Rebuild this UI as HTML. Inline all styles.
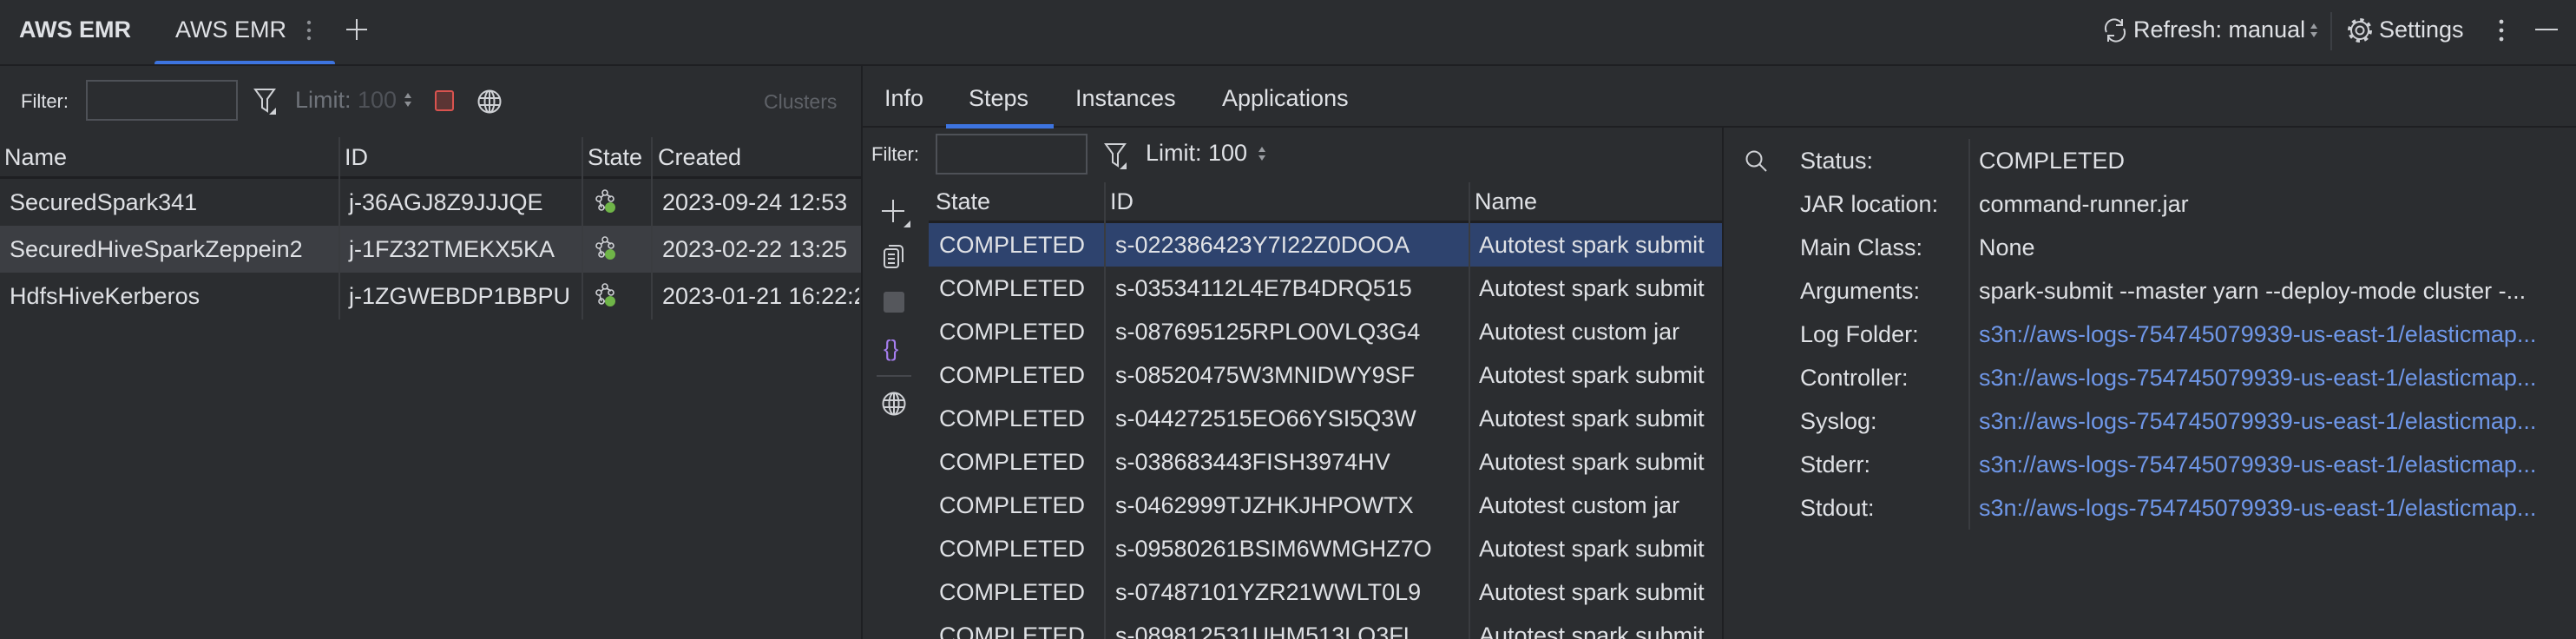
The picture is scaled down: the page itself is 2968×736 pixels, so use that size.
<!DOCTYPE html>
<html><head><meta charset="utf-8"><style>
*{margin:0;padding:0;box-sizing:border-box}
body{width:2968px;height:736px;background:#2b2d30;color:#dfe1e5;font-family:"Liberation Sans",sans-serif;font-size:27px;position:relative;overflow:hidden}
.a{position:absolute;white-space:nowrap;line-height:30px;height:30px}
.l{position:absolute}
.dim{color:#6f737a}
.lnk{color:#6f97e8}
</style></head><body>
<!-- header -->
<div class="a" style="left:22px;top:19px;font-weight:bold">AWS EMR</div>
<div class="a" style="left:202px;top:19px">AWS EMR</div>
<svg class="l" style="left:350px;top:22px" width="12" height="26"><circle cx="6" cy="4" r="2.2" fill="#8c8f94"/><circle cx="6" cy="13" r="2.2" fill="#8c8f94"/><circle cx="6" cy="22" r="2.2" fill="#8c8f94"/></svg>
<svg class="l" style="left:397px;top:20px" width="28" height="28"><path d="M14 2V26M2 14H26" stroke="#cfd1d5" stroke-width="2"/></svg>
<div class="l" style="left:178px;top:70px;width:208px;height:6px;background:#3d74e0;border-radius:3px"></div>
<div class="l" style="left:0;top:74px;width:2968px;height:2px;background:#1e1f22"></div>
<svg class="l" style="left:2421px;top:20px" width="32" height="30" fill="none" stroke="#cfd1d5" stroke-width="2"><path d="M6 17A10 10 0 0 1 24 8M26 13A10 10 0 0 1 8 22"/><path d="M24 2V9H17M8 28V21H15"/></svg>
<div class="a" style="left:2458px;top:19px">Refresh: manual</div>
<svg class="l" style="left:2661px;top:24px" width="10" height="22"><path d="M1 9L5 3L9 9ZM1 13L5 19L9 13Z" fill="#9a9da2"/></svg>
<div class="l" style="left:2685px;top:14px;width:2px;height:44px;background:#3c3f44"></div>
<svg class="l" style="left:2704px;top:20px" width="30" height="30" fill="none" stroke="#cfd1d5" stroke-width="2"><circle cx="15" cy="15" r="4.5"/><circle cx="15" cy="15" r="10"/><circle cx="15" cy="15" r="12" stroke-width="4" stroke-dasharray="4.2 5.2"/></svg>
<div class="a" style="left:2741px;top:19px">Settings</div>
<svg class="l" style="left:2876px;top:20px" width="12" height="30"><circle cx="6" cy="5" r="2.4" fill="#cfd1d5"/><circle cx="6" cy="15" r="2.4" fill="#cfd1d5"/><circle cx="6" cy="25" r="2.4" fill="#cfd1d5"/></svg>
<div class="l" style="left:2921px;top:33px;width:26px;height:2px;background:#cfd1d5"></div>

<!-- left panel -->
<div class="l" style="left:992px;top:76px;width:2px;height:660px;background:#1e1f22"></div>
<div class="a" style="left:24px;top:102px;font-size:22px">Filter:</div>
<div class="l" style="left:99px;top:92px;width:175px;height:47px;border:2px solid #4e5157"></div>
<svg class="l" style="left:292px;top:100px" width="34" height="34" fill="none" stroke="#cfd1d5" stroke-width="2"><path d="M2 3H24L16 14V28L10 24V14Z"/><path d="M26 24V32H18Z" fill="#cfd1d5" stroke="none"/></svg>
<div class="a dim" style="left:340px;top:100px">Limit: <span style="color:#4f5258">100</span></div>
<svg class="l" style="left:465px;top:104px" width="10" height="22"><path d="M1 9L5 3L9 9ZM1 13L5 19L9 13Z" fill="#8c8f94"/></svg>
<div class="l" style="left:501px;top:104px;width:22px;height:24px;border:2px solid #d9534f;background:#5b3534;border-radius:3px"></div>
<svg class="l" style="left:549px;top:102px" width="30" height="30" fill="none" stroke="#cfd1d5" stroke-width="2"><circle cx="15" cy="15" r="12.5"/><ellipse cx="15" cy="15" rx="5.5" ry="12.5"/><path d="M3 11H27M3 19H27M15 2.5V27.5"/></svg>
<div class="a" style="left:880px;top:102px;font-size:23px;color:#5f6268">Clusters</div>
<div class="a" style="left:5px;top:166px">Name</div>
<div class="a" style="left:397px;top:166px">ID</div>
<div class="a" style="left:677px;top:166px">State</div>
<div class="a" style="left:758px;top:166px">Created</div>
<div class="l" style="left:0;top:203px;width:992px;height:3px;background:#1e1f22"></div>
<div class="l" style="left:0;top:260px;width:992px;height:54px;background:#3c3e43"></div>
<div class="l" style="left:390px;top:158px;width:2px;height:210px;background:#3a3c40"></div>
<div class="l" style="left:670px;top:158px;width:2px;height:210px;background:#3a3c40"></div>
<div class="l" style="left:750px;top:158px;width:2px;height:210px;background:#3a3c40"></div>
<div style="position:absolute;left:0;top:0;width:990px;height:400px;overflow:hidden">
<div class="a" style="left:11px;top:218px">SecuredSpark341</div>
<div class="a" style="left:402px;top:218px">j-36AGJ8Z9JJJQE</div>
<div class="a" style="left:763px;top:218px">2023-09-24 12:53</div>
<div class="a" style="left:11px;top:272px">SecuredHiveSparkZeppein2</div>
<div class="a" style="left:402px;top:272px">j-1FZ32TMEKX5KA</div>
<div class="a" style="left:763px;top:272px">2023-02-22 13:25</div>
<div class="a" style="left:11px;top:326px">HdfsHiveKerberos</div>
<div class="a" style="left:402px;top:326px">j-1ZGWEBDP1BBPU</div>
<div class="a" style="left:763px;top:326px">2023-01-21 16:22:22</div>
</div>
<svg width="0" height="0" style="position:absolute"><defs><g id="st"><path d="M13 5L20 9M9 9L13 5M7 13L9 9M9 21L7 14M11 21H16" stroke="#cfd1d5" stroke-width="1.6" fill="none"/><circle cx="13" cy="4" r="3" fill="#2b2d30" stroke="#cfd1d5" stroke-width="1.6"/><circle cx="6" cy="11" r="3" fill="#2b2d30" stroke="#cfd1d5" stroke-width="1.6"/><circle cx="20" cy="11" r="3" fill="none" stroke="#cfd1d5" stroke-width="1.6"/><circle cx="9" cy="21" r="3" fill="none" stroke="#cfd1d5" stroke-width="1.6"/><circle cx="19" cy="21" r="6" fill="#6fb548"/></g></defs></svg>
<svg class="l" style="left:684px;top:218px" width="28" height="30"><use href="#st"/></svg>
<svg class="l" style="left:684px;top:272px" width="28" height="30"><use href="#st"/></svg>
<svg class="l" style="left:684px;top:326px" width="28" height="30"><use href="#st"/></svg>

<!-- right tabs -->
<div class="a" style="left:1019px;top:98px">Info</div>
<div class="a" style="left:1116px;top:98px">Steps</div>
<div class="a" style="left:1239px;top:98px">Instances</div>
<div class="a" style="left:1408px;top:98px">Applications</div>
<div class="l" style="left:994px;top:145px;width:1974px;height:2px;background:#1e1f22"></div>
<div class="l" style="left:1090px;top:143px;width:124px;height:5px;background:#3d74e0"></div>
<div class="a" style="left:1004px;top:163px;font-size:22px">Filter:</div>
<div class="l" style="left:1078px;top:154px;width:175px;height:47px;border:2px solid #4e5157"></div>
<svg class="l" style="left:1272px;top:163px" width="34" height="34" fill="none" stroke="#cfd1d5" stroke-width="2"><path d="M2 3H24L16 14V28L10 24V14Z"/><path d="M26 24V32H18Z" fill="#cfd1d5" stroke="none"/></svg>
<div class="a" style="left:1320px;top:161px">Limit: 100</div>
<svg class="l" style="left:1449px;top:166px" width="10" height="22"><path d="M1 9L5 3L9 9ZM1 13L5 19L9 13Z" fill="#9a9da2"/></svg>
<!-- side toolbar -->
<svg class="l" style="left:1016px;top:228px" width="34" height="36" fill="none" stroke="#cfd1d5" stroke-width="2"><path d="M13 2V28M0 15H26"/><path d="M33 26V34H25Z" fill="#cfd1d5" stroke="none"/></svg>
<svg class="l" style="left:1016px;top:280px" width="28" height="30" fill="none" stroke="#cfd1d5" stroke-width="2"><rect x="3" y="7" width="16" height="21" rx="3"/><path d="M8 3H20a4 4 0 0 1 4 4V22"/><path d="M7 13H15M7 18H15M7 23H15"/></svg>
<div class="l" style="left:1018px;top:336px;width:24px;height:24px;background:#55575c;border-radius:3px"></div>
<div class="a" style="left:1018px;top:386px;color:#a77ef0;font-size:26px">{}</div>
<div class="l" style="left:1010px;top:432px;width:40px;height:2px;background:#45474c"></div>
<svg class="l" style="left:1015px;top:450px" width="30" height="30" fill="none" stroke="#cfd1d5" stroke-width="2"><circle cx="15" cy="15" r="12.5"/><ellipse cx="15" cy="15" rx="5.5" ry="12.5"/><path d="M3 11H27M3 19H27M15 2.5V27.5"/></svg>
<!-- steps table -->
<div class="a" style="left:1078px;top:217px">State</div>
<div class="a" style="left:1279px;top:217px">ID</div>
<div class="a" style="left:1699px;top:217px">Name</div>
<div class="l" style="left:1070px;top:254px;width:914px;height:3px;background:#1e1f22"></div>
<div class="l" style="left:1070px;top:257px;width:914px;height:50px;background:#2e436e"></div>
<div class="l" style="left:1272px;top:210px;width:2px;height:526px;background:#3a3c40"></div>
<div class="l" style="left:1692px;top:210px;width:2px;height:526px;background:#3a3c40"></div>
<div class="l" style="left:1984px;top:147px;width:2px;height:589px;background:#1e1f22"></div>
<div style="position:absolute;left:1070px;top:257px;width:914px;height:479px;overflow:hidden">
<div class="a" style="left:12px;top:10px">COMPLETED</div><div class="a" style="left:215px;top:10px">s-022386423Y7I22Z0DOOA</div><div class="a" style="left:634px;top:10px">Autotest spark submit</div>
<div class="a" style="left:12px;top:60px">COMPLETED</div><div class="a" style="left:215px;top:60px">s-03534112L4E7B4DRQ515</div><div class="a" style="left:634px;top:60px">Autotest spark submit</div>
<div class="a" style="left:12px;top:110px">COMPLETED</div><div class="a" style="left:215px;top:110px">s-087695125RPLO0VLQ3G4</div><div class="a" style="left:634px;top:110px">Autotest custom jar</div>
<div class="a" style="left:12px;top:160px">COMPLETED</div><div class="a" style="left:215px;top:160px">s-08520475W3MNIDWY9SF</div><div class="a" style="left:634px;top:160px">Autotest spark submit</div>
<div class="a" style="left:12px;top:210px">COMPLETED</div><div class="a" style="left:215px;top:210px">s-044272515EO66YSI5Q3W</div><div class="a" style="left:634px;top:210px">Autotest spark submit</div>
<div class="a" style="left:12px;top:260px">COMPLETED</div><div class="a" style="left:215px;top:260px">s-038683443FISH3974HV</div><div class="a" style="left:634px;top:260px">Autotest spark submit</div>
<div class="a" style="left:12px;top:310px">COMPLETED</div><div class="a" style="left:215px;top:310px">s-0462999TJZHKJHPOWTX</div><div class="a" style="left:634px;top:310px">Autotest custom jar</div>
<div class="a" style="left:12px;top:360px">COMPLETED</div><div class="a" style="left:215px;top:360px">s-09580261BSIM6WMGHZ7O</div><div class="a" style="left:634px;top:360px">Autotest spark submit</div>
<div class="a" style="left:12px;top:410px">COMPLETED</div><div class="a" style="left:215px;top:410px">s-07487101YZR21WWLT0L9</div><div class="a" style="left:634px;top:410px">Autotest spark submit</div>
<div class="a" style="left:12px;top:460px">COMPLETED</div><div class="a" style="left:215px;top:460px">s-089812531UHM513LO3FL</div><div class="a" style="left:634px;top:460px">Autotest spark submit</div>
</div>
<!-- detail -->
<svg class="l" style="left:2010px;top:172px" width="28" height="28" fill="none" stroke="#cfd1d5" stroke-width="2"><circle cx="11" cy="11" r="8.5"/><path d="M17 17L25 25"/></svg>
<div class="l" style="left:2268px;top:160px;width:2px;height:450px;background:#3a3c40"></div>
<div class="a" style="left:2074px;top:170px">Status:</div><div class="a" style="left:2280px;top:170px">COMPLETED</div>
<div class="a" style="left:2074px;top:220px">JAR location:</div><div class="a" style="left:2280px;top:220px">command-runner.jar</div>
<div class="a" style="left:2074px;top:270px">Main Class:</div><div class="a" style="left:2280px;top:270px">None</div>
<div class="a" style="left:2074px;top:320px">Arguments:</div><div class="a" style="left:2280px;top:320px">spark-submit --master yarn --deploy-mode cluster -...</div>
<div class="a" style="left:2074px;top:370px">Log Folder:</div><div class="a lnk" style="left:2280px;top:370px">s3n://aws-logs-754745079939-us-east-1/elasticmap...</div>
<div class="a" style="left:2074px;top:420px">Controller:</div><div class="a lnk" style="left:2280px;top:420px">s3n://aws-logs-754745079939-us-east-1/elasticmap...</div>
<div class="a" style="left:2074px;top:470px">Syslog:</div><div class="a lnk" style="left:2280px;top:470px">s3n://aws-logs-754745079939-us-east-1/elasticmap...</div>
<div class="a" style="left:2074px;top:520px">Stderr:</div><div class="a lnk" style="left:2280px;top:520px">s3n://aws-logs-754745079939-us-east-1/elasticmap...</div>
<div class="a" style="left:2074px;top:570px">Stdout:</div><div class="a lnk" style="left:2280px;top:570px">s3n://aws-logs-754745079939-us-east-1/elasticmap...</div>
</body></html>
